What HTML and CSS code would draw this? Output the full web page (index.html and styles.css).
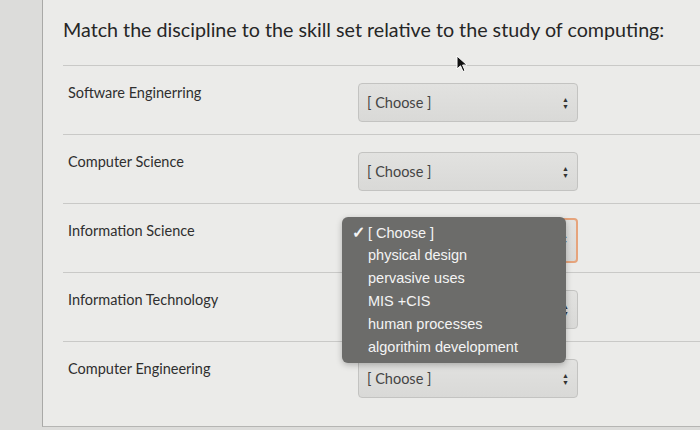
FILE: index.html
```html
<!DOCTYPE html>
<html lang="en">
<head>
  <meta charset="UTF-8" />
  <title>Matching Question</title>
  <link rel="stylesheet" href="styles.css">
</head>
<body>
  <div class="page">
    <div class="question">
      <h2 class="question-text">Match the discipline to the skill set relative to the study of computing:</h2>

      <div class="answers">
        <div class="answer">
          <div class="answer-label">Software Enginerring</div>
          <div class="select">[ Choose ]<span class="arrows">&#9650;<br>&#9660;</span></div>
        </div>
        <div class="answer">
          <div class="answer-label">Computer Science</div>
          <div class="select">[ Choose ]<span class="arrows">&#9650;<br>&#9660;</span></div>
        </div>
        <div class="answer">
          <div class="answer-label">Information Science</div>
          <!-- value hidden behind the open menu -->
          <div class="select focused"><span class="arrows">&#9650;<br>&#9660;</span></div>
        </div>
        <div class="answer">
          <div class="answer-label">Information Technology</div>
          <div class="select"><span class="arrows">&#9650;<br>&#9660;</span></div>
        </div>
        <div class="answer">
          <div class="answer-label">Computer Engineering</div>
          <div class="select">[ Choose ]<span class="arrows">&#9650;<br>&#9660;</span></div>
        </div>
      </div>
    </div>

    <!-- open dropdown of the third select -->
    <ul class="menu">
      <li class="checked"><span class="check">&#10003;</span>[ Choose ]</li>
      <li>physical design</li>
      <li>pervasive uses</li>
      <li>MIS +CIS</li>
      <li>human processes</li>
      <li>algorithim development</li>
    </ul>

    <svg class="cursor" width="14" height="18" viewBox="0 0 14 18">
      <path d="M1 1 L1 14 L4.5 10.8 L7 16.5 L9 15.6 L6.6 10 L11 10 Z" fill="#111" stroke="#fff" stroke-width="1"/>
    </svg>
  </div>
</body>
</html>
```

FILE: styles.css
```css
:root {
  --strip: #dcdcda;
  --bg: #ebebe9;
  --text: #333;
  --line: #c9c9c7;
  --menu: #6c6c6a;
}

body {
  margin: 0;
  background: var(--strip);
  font-family: Lato, "Open Sans", sans-serif;
  color: var(--text);
}

.page {
  position: relative;
  width: 700px;
  height: 430px;
  overflow: hidden;
}

.question {
  margin-left: 42px;
  height: 427px;
  background: var(--bg);
  border-left: 1px solid #a9a9a7;
  border-bottom: 1px solid #b5b5b3;
  padding-left: 20px;
  box-sizing: border-box;
}

.question-text {
  margin: 0;
  padding-top: 18px;
  height: 65px;
  box-sizing: border-box;
  font-size: 19.7px;
  font-weight: normal;
  color: #262626;
}

.answer {
  display: flex;
  align-items: flex-start;
  height: 69px;
  box-sizing: border-box;
  border-top: 1px solid var(--line);
  padding-top: 17px;
}

.answer-label {
  width: 290px;
  padding-left: 5px;
  padding-top: 1px;
  font-size: 14.5px;
  color: #2f2f2f;
}

.select {
  position: relative;
  width: 220px;
  height: 39px;
  box-sizing: border-box;
  padding: 10px 0 0 8px;
  background: linear-gradient(#e2e2e0, #d9d9d7);
  border: 1px solid #c3c3c1;
  border-radius: 4px;
  font-size: 14.5px;
  color: #444;
}

.select.focused {
  border: 2px solid #e6a47c;
  height: 45px;
  margin-top: -3px;
}

.arrows {
  position: absolute;
  right: 8px;
  top: 12px;
  font-size: 7px;
  line-height: 7px;
  color: #333;
}

.menu {
  position: absolute;
  left: 342px;
  top: 217px;
  width: 224px;
  margin: 0;
  padding: 4px 0;
  list-style: none;
  background: var(--menu);
  border-radius: 6px;
  box-shadow: 0 2px 6px rgba(0, 0, 0, 0.25);
  font-family: "Liberation Sans", Arial, sans-serif;
  font-size: 14.5px;
  color: #f4f4f4;
}

.menu li {
  height: 23px;
  line-height: 23px;
  padding-left: 26px;
}

.check {
  display: inline-block;
  width: 16px;
  margin-left: -16px;
  font-size: 16px;
  font-weight: bold;
}

.cursor {
  position: absolute;
  left: 456px;
  top: 55px;
}
```
